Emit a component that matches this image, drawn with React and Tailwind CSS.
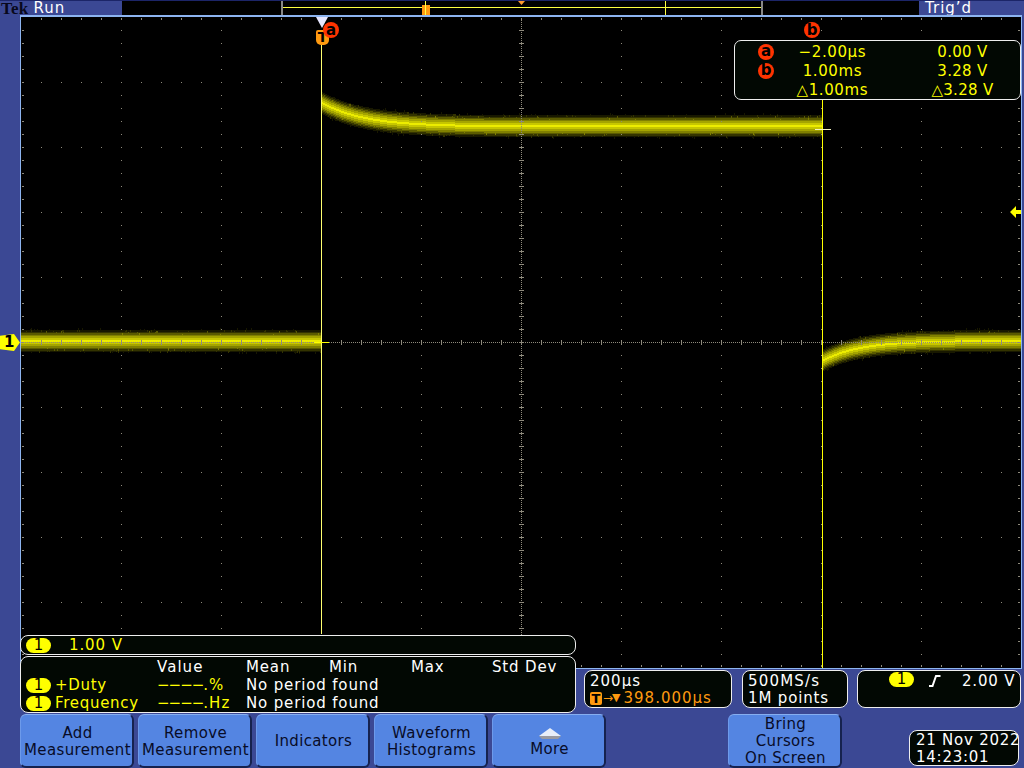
import React from "react";

const FONT = "font-['DejaVu_Sans',sans-serif]";

function makeRnd(seed) {
  let s = seed;
  return () => {
    s = (s + 0x6d2b79f5) | 0;
    let t = Math.imul(s ^ (s >>> 15), 1 | s);
    t = (t + Math.imul(t ^ (t >>> 7), 61 | t)) ^ t;
    return ((t ^ (t >>> 14)) >>> 0) / 4294967296;
  };
}

function band(fn, x0, x1, hw, spike, rnd) {
  const tops = [];
  const bots = [];
  for (let x = x0; x < x1; x++) {
    const c = fn(x);
    const jt = rnd() < spike ? 1 + Math.floor(rnd() * 2) : 0;
    const jb = rnd() < spike ? 1 + Math.floor(rnd() * 2) : 0;
    tops.push(Math.round(c - hw - jt));
    bots.push(Math.round(c + hw + jb));
  }
  let d = `M${x0} ${tops[0]}`;
  for (let i = 0; i < tops.length; i++) d += `V${tops[i]}H${x0 + i + 1}`;
  for (let i = bots.length - 1; i >= 0; i--) d += `V${bots[i]}H${x0 + i}`;
  return d + "Z";
}

const layers = [
  { c: "#181800", hw: 11, spike: 0.06 },
  { c: "#333300", hw: 9.5, spike: 0.08 },
  { c: "#5a5a00", hw: 8, spike: 0.04 },
  { c: "#808000", hw: 6.5, spike: 0.02 },
  { c: "#a4a400", hw: 5, spike: 0 },
  { c: "#c6c600", hw: 3, spike: 0 },
  { c: "#ecec00", hw: 1, spike: 0 },
];

const segments = [
  { x0: 21, x1: 322, fn: () => 341 },
  { x0: 322, x1: 822, fn: (x) => 126.5 - 23.5 * Math.exp(-(x - 322) / 42) },
  { x0: 822, x1: 1021, fn: (x) => 341 + 20 * Math.exp(-(x - 822) / 36) },
];

const rnd = makeRnd(42);
const tracePaths = layers.map((l) => ({
  c: l.c,
  d: segments.map((s) => band(s.fn, s.x0, s.x1, l.hw, l.spike, rnd)).join(""),
}));

const r = (x, y, w, h) => `M${x} ${y}h${w}v${h}h${-w}z`;
let grid = "";
for (let x = 41; x <= 1001; x += 20) {
  grid += r(x, 18, 1, 2) + r(x, 665, 1, 2);
  grid += r(x, 340, 1, 5);
}
for (let y = 30; y <= 654; y += 13) {
  grid += r(22, y, 2, 1) + r(1018, y, 2, 1);
  grid += r(519, y, 5, 1);
}
for (let x = 121; x <= 921; x += 100) {
  for (let y = 30; y <= 654; y += 13) grid += r(x, y, 1, 1);
}
for (let y = 82; y <= 602; y += 65) {
  for (let x = 41; x <= 1001; x += 20) grid += r(x, y, 1, 1);
}
for (let x = 21; x <= 1020; x += 2) grid += r(x, 342, 1, 1);
for (let y = 18; y <= 666; y += 2) grid += r(521, y, 1, 1);

function Screen() {
  return (
    <svg viewBox="21 17 1000 651" width="1000" height="651" className="block" shapeRendering="crispEdges">
      {tracePaths.map((p, i) => (
        <path key={i} d={p.d} fill={p.c} />
      ))}
      <path d={grid} fill="#8e8a7c" />
      <rect x="321" y="44" width="1" height="590" fill="#ffff70" />
      <rect x="822" y="100" width="1" height="568" fill="#ffff00" />
      <rect x="815" y="129" width="16" height="1" fill="#f4f4c0" />
      <rect x="314" y="342" width="15" height="1" fill="#ffff00" />
      <path d="M316 17h12l-6 11z" fill="#e6e6ff" shapeRendering="auto" />
      <path d="M1010 212l6-6v4h5v4h-5v4z" fill="#ffff00" shapeRendering="auto" />
    </svg>
  );
}

function RecordView() {
  return (
    <svg viewBox="122 1 797 14" width="797" height="14" className="block" shapeRendering="crispEdges">
      <rect x="283" y="7" width="478" height="1" fill="#ffff40" />
      <rect x="281" y="1" width="2" height="14" fill="#888888" />
      <rect x="761" y="1" width="2" height="14" fill="#888888" />
      <rect x="422" y="5" width="8" height="10" fill="#ff9a10" />
      <rect x="425" y="1" width="1" height="14" fill="#ffff40" />
      <rect x="665" y="1" width="1" height="14" fill="#ffff40" />
      <path d="M518 1h7l-3.500 4z" fill="#ff9a30" shapeRendering="auto" />
    </svg>
  );
}

function CursorDot({ children, className = "" }) {
  return (
    <div className={`w-[16px] h-[16px] rounded-full bg-[#ff3300] flex items-center justify-center text-black text-[15px] leading-none font-bold ${className}`}>
      {children}
    </div>
  );
}

function Pill() {
  return (
    <div className="w-[25px] h-[15px] rounded-full bg-[#ffff00] text-black text-[15px] tracking-normal leading-none flex items-center justify-center shrink-0">1</div>
  );
}

function CursorRow({ dot, time, value }) {
  return (
    <div className="flex items-center h-[19px]">
      <div className="w-[52px] pl-[23px]">{dot && <CursorDot>{dot}</CursorDot>}</div>
      <div className="w-[92px] text-center tracking-[0.6px]">{time}</div>
      <div className="ml-[27px] w-[116px] text-center tracking-[0.3px]">{value}</div>
    </div>
  );
}

function Button({ children, className = "" }) {
  return (
    <div className={`w-[114px] h-[54px] shrink-0 rounded-[6px] bg-[#5485e2] border-t border-l border-t-[#86aef0] border-l-[#6d9aea] border-r-2 border-b-2 border-r-[#16224f] border-b-[#16224f] text-[#080c28] text-[15px] leading-[17px] tracking-[0.35px] text-center flex flex-col items-center justify-center pt-[2px] pl-[2px] ${className}`}>
      {children}
    </div>
  );
}

function Dashes() {
  return <span className="tracking-[-1px]">−−−−</span>;
}

function MeasureRow({ label, value, stat }) {
  return (
    <div className="flex items-center h-[18px]">
      <div className="w-[136px] pl-[5px] flex items-center gap-[4px] text-[#ffff00] tracking-[0.7px]">
        <Pill />
        <span>{label}</span>
      </div>
      <div className="w-[89px] text-[#ffff00]">{value}</div>
      <div className="text-white tracking-[0.85px]">{stat}</div>
    </div>
  );
}

export default function App() {
  return (
    <div className={`w-[1024px] h-[768px] overflow-hidden bg-[#3b4894] text-[15px] leading-[18px] ${FONT}`}>
      <div className="flex h-[15px] border-t border-[#1c2568]">
        <div className="w-[122px] flex items-start h-[14px]">
          <span className="font-['Liberation_Serif',serif] font-bold text-[#08081c] text-[17px] leading-[14px] mt-[1px] pl-[1px] tracking-[0.2px]">Tek</span>
          <span className="text-white ml-[5px] leading-[14px] tracking-[1px]">Run</span>
        </div>
        <div className="w-[797px] bg-black h-[14px]">
          <RecordView />
        </div>
        <div className="pl-[6px] text-white leading-[14px] tracking-[1px]">Trig’d</div>
      </div>

      <div className="relative ml-[20px] w-[1002px] h-[654px] border-l border-r border-t-2 border-b border-[#8db4f0] bg-black">
        <Screen />
        <div className="absolute left-[-21px] top-[317px] w-[20px] h-[17px] bg-[#ffff00] text-black text-[15px] font-bold leading-[17px] pl-[4px] [clip-path:polygon(0_10%,70%_0,100%_50%,70%_100%,0_90%)]">1</div>
        <CursorDot className="absolute left-[302px] top-[5px] z-10">a</CursorDot>
        <div className="absolute left-[295px] top-[13px] w-[13px] h-[15px] rounded-b-[5px] rounded-t-[2px] bg-[#ff9a10] text-black text-[14px] leading-[14px] font-bold text-center">T</div>
        <CursorDot className="absolute left-[783px] top-[5px]">b</CursorDot>
        <div className="absolute left-[713px] top-[23px] w-[287px] h-[60px] rounded-[7px] border border-[#eeeeee] bg-[#020803] text-[#ffff00] py-[1px]">
          <CursorRow dot="a" time="−2.00µs" value="0.00 V" />
          <CursorRow dot="b" time="1.00ms" value="3.28 V" />
          <CursorRow time="△1.00ms" value="△3.28 V" />
        </div>
      </div>

      <div className="flex h-[45px]">
        <div className="ml-[20px] w-[556px] -mt-[34px] relative z-10 shrink-0">
          <div className="h-[20px] rounded-[8px] border border-[#eeeeee] bg-[#020803] flex items-center pl-[5px] text-[#ffff00] tracking-[0.9px]">
            <Pill />
            <span className="ml-[18px]">1.00 V</span>
          </div>
          <div className="mt-[1px] h-[57px] rounded-[8px] border border-[#eeeeee] bg-[#020803] tracking-[1.05px] pt-[1px]">
            <div className="flex h-[18px] text-white">
              <div className="w-[136px]" />
              <div className="w-[89px]">Value</div>
              <div className="w-[83px] tracking-[0.85px]">Mean</div>
              <div className="w-[82px] tracking-[0.85px]">Min</div>
              <div className="w-[81px] tracking-[0.85px]">Max</div>
              <div className="tracking-[0.85px]">Std Dev</div>
            </div>
            <MeasureRow label="+Duty" value={<><Dashes />.%</>} stat="No period found" />
            <MeasureRow label="Frequency" value={<><Dashes />.Hz</>} stat="No period found" />
          </div>
        </div>
        <div className="ml-[8px] mt-[1px] w-[148px] h-[38px] shrink-0 rounded-[8px] border border-[#eeeeee] bg-[#020803] pl-[5px] pt-[1px] tracking-[1px] whitespace-nowrap">
          <div className="text-white h-[17px]">200µs</div>
          <div className="flex items-center text-[#ff9a10] h-[18px]">
            <span className="w-[12px] h-[13px] rounded-[2px] bg-[#ff9a10] text-black text-[13px] leading-[13px] font-bold text-center tracking-normal">T</span>
            <span className="text-[12px] tracking-normal ml-[1px]">→</span>
            <span className="text-[11px] tracking-normal -ml-[1px]">▼</span>
            <span className="ml-[3px]">398.000µs</span>
          </div>
        </div>
        <div className="ml-[10px] mt-[1px] w-[106px] h-[38px] shrink-0 rounded-[8px] border border-[#eeeeee] bg-[#020803] pl-[5px] pt-[1px] text-white tracking-[0.85px] whitespace-nowrap">
          <div className="h-[17px] tracking-[1.2px]">500MS/s</div>
          <div className="h-[18px]">1M points</div>
        </div>
        <div className="ml-[9px] mt-[1px] w-[164px] h-[38px] shrink-0 rounded-[8px] border border-[#eeeeee] bg-[#020803] pl-[31px] pt-[1px] flex items-start text-white tracking-[0.8px]">
          <Pill />
          <svg width="12" height="12" viewBox="0 0 12 12" className="ml-[15px] mt-[3px]" fill="none" stroke="#ffffff" strokeWidth="2">
            <path d="M0 11h3.500L7 1h4.500" />
          </svg>
          <span className="ml-[21px]">2.00 V</span>
        </div>
      </div>

      <div className="flex pl-[20px] gap-[4px]">
        <Button>
          <span>Add</span>
          <span>Measurement</span>
        </Button>
        <Button>
          <span>Remove</span>
          <span>Measurement</span>
        </Button>
        <Button>Indicators</Button>
        <Button>
          <span>Waveform</span>
          <span>Histograms</span>
        </Button>
        <Button>
          <svg width="22" height="12" viewBox="0 0 22 12" className="mb-[1px] mt-[3px]">
            <path d="M11 0l11 8h-22z" fill="#e8eef8" />
            <path d="M0 8h22l-3 3h-16z" fill="#9a9aa0" />
          </svg>
          <span>More</span>
        </Button>
        <Button className="ml-[118px]">
          <span>Bring</span>
          <span>Cursors</span>
          <span>On Screen</span>
        </Button>
        <div className="ml-[63px] mt-[16px] w-[110px] h-[36px] rounded-[8px] border border-[#eeeeee] bg-[#020803] pl-[6px] text-white tracking-[0.75px] shrink-0 whitespace-nowrap">
          <div className="h-[17px]">21 Nov 2022</div>
          <div className="h-[17px]">14:23:01</div>
        </div>
      </div>
    </div>
  );
}
